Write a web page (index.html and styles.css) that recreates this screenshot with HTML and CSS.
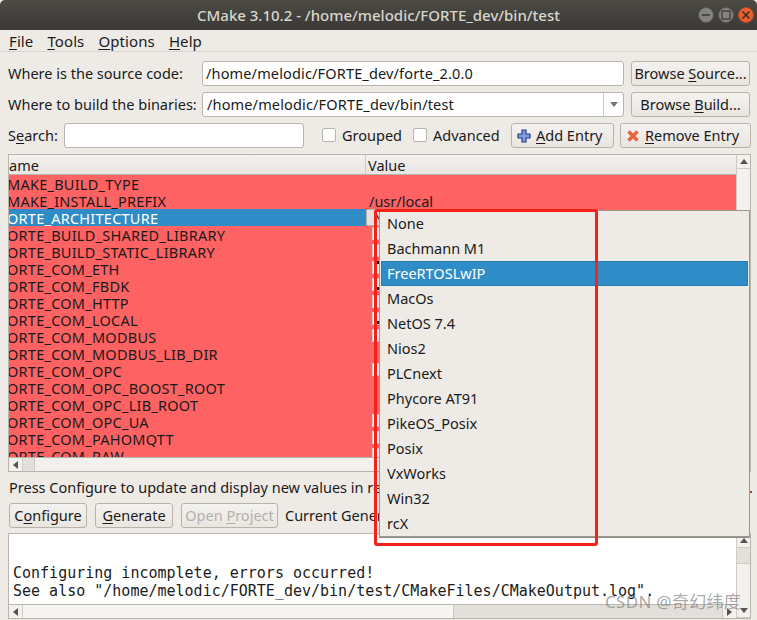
FILE: index.html
```html
<!DOCTYPE html>
<html lang="en">
<head>
<meta charset="utf-8">
<title>CMake 3.10.2</title>
<link rel="stylesheet" href="styles.css">
</head>
<body>
<div class="window">
  <header class="titlebar">
    <span class="title">CMake 3.10.2 - /home/melodic/FORTE_dev/bin/test</span>
    <div class="wm">
      <span class="wm-btn"><svg width="10" height="10" viewBox="0 0 10 10"><path d="M1 5h8" stroke="#35342f" stroke-width="1.5"/></svg></span>
      <span class="wm-btn"><svg width="10" height="10" viewBox="0 0 10 10"><rect x="1" y="1" width="8" height="8" fill="none" stroke="#35342f" stroke-width="1.2"/></svg></span>
      <span class="wm-btn wm-close"><svg width="10" height="10" viewBox="0 0 10 10"><path d="M1.5 1.5l7 7M8.5 1.5l-7 7" stroke="#3c2a20" stroke-width="1.5"/></svg></span>
    </div>
  </header>
  <nav class="menubar">
    <span><u>F</u>ile</span><span><u>T</u>ools</span><span><u>O</u>ptions</span><span><u>H</u>elp</span>
  </nav>
  <div class="form-row first">
    <label class="path-label">Where is the source code:</label>
    <div class="field grow">/home/melodic/FORTE_dev/forte_2.0.0</div>
    <button class="btn browse"><span>Browse <u>S</u>ource...</span></button>
  </div>
  <div class="form-row">
    <label class="path-label">Where to build the binaries:</label>
    <div class="field grow combo"><span class="combo-text">/home/melodic/FORTE_dev/bin/test</span><span class="combo-arrow"><i class="tri-down"></i></span></div>
    <button class="btn browse"><span>Browse <u>B</u>uild...</span></button>
  </div>
  <div class="form-row search-row">
    <label class="search-label">S<u>e</u>arch:</label>
    <div class="field search"></div>
    <label class="check c1"><i class="box"></i>Grouped</label>
    <label class="check c2"><i class="box"></i>Advanced</label>
    <button class="btn add"><svg width="14" height="14" viewBox="0 0 14 14"><path d="M5 1h4v4h4v4H9v4H5V9H1V5h4z" fill="#7f9fdc" stroke="#1f3f8f" stroke-width="1.2"/></svg><span><u>A</u>dd Entry</span></button>
    <button class="btn remove"><svg width="14" height="14" viewBox="0 0 14 14"><path d="M2.5 2.5l9 9M11.5 2.5l-9 9" stroke="#e8643c" stroke-width="3.4"/></svg><span><u>R</u>emove Entry</span></button>
  </div>
  <section class="table">
    <div class="table-main">
      <div class="thead"><div class="th name-col">ame</div><div class="th value-col">Value</div></div>
      <div class="tbody">
        <div class="tr"><div class="name-col">MAKE_BUILD_TYPE</div></div>
        <div class="tr"><div class="name-col">MAKE_INSTALL_PREFIX</div><div class="value-col">/usr/local</div></div>
        <div class="tr sel"><div class="name-col">ORTE_ARCHITECTURE</div><div class="value-col"><i class="editor">None</i></div></div>
        <div class="tr"><div class="name-col">ORTE_BUILD_SHARED_LIBRARY</div><div class="value-col"><i class="cb"></i></div></div>
        <div class="tr"><div class="name-col">ORTE_BUILD_STATIC_LIBRARY</div><div class="value-col"><i class="cb"></i></div></div>
        <div class="tr"><div class="name-col">ORTE_COM_ETH</div><div class="value-col"><i class="cb on hi"></i></div></div>
        <div class="tr"><div class="name-col">ORTE_COM_FBDK</div><div class="value-col"><i class="cb on"></i></div></div>
        <div class="tr"><div class="name-col">ORTE_COM_HTTP</div><div class="value-col"><i class="cb"></i></div></div>
        <div class="tr"><div class="name-col">ORTE_COM_LOCAL</div><div class="value-col"><i class="cb on"></i></div></div>
        <div class="tr"><div class="name-col">ORTE_COM_MODBUS</div><div class="value-col"><i class="cb"></i></div></div>
        <div class="tr"><div class="name-col">ORTE_COM_MODBUS_LIB_DIR</div></div>
        <div class="tr"><div class="name-col">ORTE_COM_OPC</div><div class="value-col"><i class="cb"></i></div></div>
        <div class="tr"><div class="name-col">ORTE_COM_OPC_BOOST_ROOT</div></div>
        <div class="tr"><div class="name-col">ORTE_COM_OPC_LIB_ROOT</div></div>
        <div class="tr"><div class="name-col">ORTE_COM_OPC_UA</div><div class="value-col"><i class="cb"></i></div></div>
        <div class="tr"><div class="name-col">ORTE_COM_PAHOMQTT</div><div class="value-col"><i class="cb"></i></div></div>
        <div class="tr"><div class="name-col">ORTE_COM_RAW</div><div class="value-col"><i class="cb"></i></div></div>
      </div>
      <div class="hscroll"><span class="arrow-btn"><i class="tri-left"></i></span><span class="thumb"></span></div>
    </div>
    <div class="vscroll"><span class="arrow-btn v"><i class="tri-up"></i></span></div>
  </section>
  <p class="hint">Press Configure to update and display new values in red, then press Generate to generate selected build files.</p>
  <div class="actions">
    <button class="btn action"><span>C<u>o</u>nfigure</span></button>
    <button class="btn action"><span><u>G</u>enerate</span></button>
    <button class="btn action open" disabled><span>Open <u>P</u>roject</span></button>
    <span class="generator">Current Generator: Unix Makefiles</span>
  </div>
  <section class="output">
    <div class="out-main">
      <pre class="log">Configuring incomplete, errors occurred!
See also "/home/melodic/FORTE_dev/bin/test/CMakeFiles/CMakeOutput.log".</pre>
      <div class="hscroll out"><span class="arrow-btn"><i class="tri-left"></i></span><span class="out-thumb"></span><span class="out-rest"></span><span class="arrow-btn right"><i class="tri-right"></i></span></div>
    </div>
    <div class="vscroll out-v"><span class="arrow-btn v"><i class="tri-up"></i></span><span class="v-thumb"></span><span class="v-gap"></span><span class="arrow-btn v"><i class="tri-down dark"></i></span></div>
  </section>
</div>
<ul class="popup">
  <li>None</li>
  <li>Bachmann M1</li>
  <li class="current">FreeRTOSLwIP</li>
  <li>MacOs</li>
  <li>NetOS 7.4</li>
  <li>Nios2</li>
  <li>PLCnext</li>
  <li>Phycore AT91</li>
  <li>PikeOS_Posix</li>
  <li>Posix</li>
  <li>VxWorks</li>
  <li>Win32</li>
  <li>rcX</li>
</ul>
<div class="annotation"></div>
<div class="watermark">CSDN @奇幻纬度</div>
</body>
</html>
```
FILE: styles.css
```css
* { box-sizing: border-box; }
html, body { margin: 0; padding: 0; }
body {
  width: 757px; height: 620px; overflow: hidden; position: relative;
  background: #eeebe7; color: #1a1a1a;
  font: 14.5px/1.2 "Noto Sans", "Open Sans", sans-serif;
}
u { text-decoration-thickness: 1px; text-underline-offset: 2px; }
.window { display: flex; flex-direction: column; height: 620px; }
.titlebar {
  height: 30px; flex: none; position: relative;
  display: flex; align-items: center; justify-content: center;
  background: linear-gradient(#4b4a45, #3a3935);
  border-radius: 5px 5px 0 0;
}
.title { color: #d8d5cc; font: 500 15px "Noto Sans", sans-serif; }
.wm { position: absolute; right: 3px; top: 7px; display: flex; gap: 4px; }
.wm-btn {
  width: 16px; height: 16px; border-radius: 50%;
  background: #84837d; display: flex; align-items: center; justify-content: center;
  border: 1px solid #55544f;
}
.wm-close { background: #e9602e; border-color: #b04a24; }
.menubar {
  height: 22px; flex: none; display: flex; gap: 14px; padding: 1px 0 0 9px;
  border-bottom: 1px solid #d8d5d0; font-size: 15px; letter-spacing: .1px; align-items: center;
}
.form-row { display: flex; align-items: center; height: 25px; margin-top: 6px; padding: 0 7px 0 8px; flex: none; }
.form-row.first { margin-top: 9px; }
.path-label { width: 194px; flex: none; white-space: nowrap; }
.field {
  height: 25px; background: #fff; border: 1px solid #bab5ab; border-radius: 3px;
  padding-left: 3px; line-height: 23px; white-space: nowrap; letter-spacing: .15px;
}
.grow { flex: 1; min-width: 0; }
.combo { display: flex; padding-left: 4px; }
.combo-text { flex: 1; }
.combo-arrow { width: 20px; border-left: 1px solid #cfcbc4; display: flex; align-items: center; justify-content: center; }
.btn {
  font: inherit; color: inherit; height: 25px; padding: 0;
  background: linear-gradient(#f4f2f0, #e9e6e1);
  border: 1px solid #b8b3a9; border-radius: 3px;
  display: flex; align-items: center; justify-content: center; gap: 5px;
  white-space: nowrap;
}
.browse { width: 119px; margin-left: 7px; flex: none; }
.search-label { width: 56px; flex: none; }
.search { width: 240px; flex: none; }
.check { display: flex; align-items: center; gap: 6px; flex: none; }
.box { width: 14px; height: 14px; background: #fff; border: 1px solid #bab5ab; border-radius: 2px; display: block; }
.c1 { margin-left: 18px; width: 91px; }
.c2 { width: 98px; }
.add { width: 103px; flex: none; justify-content: flex-start; padding-left: 5px; gap: 5px; }
.remove { width: 131px; margin-left: 6px; flex: none; justify-content: flex-start; padding-left: 5px; gap: 5px; }
.table {
  height: 318px; margin: 6px 6px 0 8px; flex: none; display: flex;
  border: 1px solid #bab5ab; background: #fff;
}
.table-main { flex: 1; min-width: 0; display: flex; flex-direction: column; }
.thead {
  height: 20px; flex: none; display: flex; background: linear-gradient(#f3f1ef, #e9e6e2);
  border-bottom: 1px solid #bab5ab; line-height: 20px;
}
.name-col { width: 357px; flex: none; white-space: nowrap; overflow: hidden; }
.value-col { flex: 1; min-width: 0; white-space: nowrap; position: relative; padding-left: 3px; }
.th.name-col { border-right: 1px solid #cfcbc4; }
.th.value-col { padding-left: 2px; }
.tbody { flex: 1; min-height: 0; overflow: hidden; background: #ff6262; }
.tr { height: 17px; display: flex; line-height: 19px; }
.tr .name-col { text-indent: -2px; letter-spacing: .25px; line-height: 19px; }
.tr.sel { background: #308cc6; color: #fff; }
.tr.sel .value-col { background: #ff6262; }
.editor {
  position: absolute; left: 0; top: 0; width: 40px; height: 17px; padding-left: 6px;
  background: #e6e3de; border: 1px solid #b8b3a9; border-radius: 2px; display: block;
  font-style: normal; color: #1a1a1a; line-height: 15px;
}
.cb { position: absolute; left: 6px; top: 1px; width: 13px; height: 13px; background: #f4f2f0; border: 1px solid #d2cfca; display: block; }
.cb.on::after { content: ""; position: absolute; left: 4px; top: 8px; width: 2px; height: 3px; background: #111; }
.cb.on.hi::after { top: -1px; }
.hscroll {
  height: 14px; flex: none; display: flex; background: #f3f1ee; border-top: 1px solid #bab5ab;
}
.arrow-btn { width: 14px; flex: none; display: flex; align-items: center; justify-content: center; background: #f3f1ee; border-right: 1px solid #cfcbc4; }
.arrow-btn.v { width: auto; height: 14px; border-right: 0; border-bottom: 1px solid #cfcbc4; flex: none; }
.arrow-btn.right { border-right: 0; border-left: 1px solid #cfcbc4; }
.thumb { width: 12px; background: #e3e0dc; border-right: 1px solid #cfcbc4; }
.vscroll { width: 14px; flex: none; display: flex; flex-direction: column; background: #f3f1ee; border-left: 1px solid #cfcbc4; }
.tri-up, .tri-down, .tri-left, .tri-right { width: 0; height: 0; display: block; border-style: solid; border-color: transparent; }
.tri-up { border-width: 0 4px 5px; border-bottom-color: #555; }
.tri-down { border-width: 5px 4px 0; border-top-color: #777; }
.tri-down.dark { border-top-color: #555; }
.tri-left { border-width: 4px 5px 4px 0; border-right-color: #555; }
.tri-right { border-width: 4px 0 4px 5px; border-left-color: #555; }
.hint { margin: 5px 0 0 9px; height: 20px; line-height: 20px; white-space: nowrap; flex: none; }
.actions { display: flex; align-items: center; height: 25px; margin-top: 6px; padding-left: 9px; flex: none; white-space: nowrap; overflow: hidden; }
.action { width: 78px; flex: none; margin-right: 8px; }
.open { width: 97px; margin-right: 7px; color: #b3b0aa; }
.output {
  flex: 1; min-height: 0; margin: 5px 6px 1px 8px; display: flex;
  border: 1px solid #bab5ab; background: #fff;
}
.out-main { flex: 1; min-width: 0; display: flex; flex-direction: column; }
.log {
  flex: 1; min-height: 0; overflow: hidden; margin: 0; padding: 30px 0 0 4px;
  font: 15px/18px "DejaVu Sans Mono", monospace; color: #1c1c1c;
}
.out-thumb { width: 431px; background: #f6f5f3; border-right: 1px solid #cfcbc4; flex: none; }
.out-rest { flex: 1; background: #e3e0dc; }
.out-v { background: #f3f1ee; }
.v-thumb { height: 16px; background: #e3e0dc; border-bottom: 1px solid #cfcbc4; flex: none; }
.v-gap { flex: 1; }
.popup {
  position: absolute; left: 379px; top: 210px; width: 371px; height: 327px;
  margin: 0; padding: 0 1px; list-style: none; background: #eeebe6;
  border: 1px solid #9b9891; box-shadow: 0 1px 0 #8f8c86;
}
.popup li { height: 25px; line-height: 25px; padding-left: 6px; white-space: nowrap; }
.popup .current { background: #308cc6; color: #fff; border: 1px solid #2a7bb0; line-height: 23px; padding-left: 5px; }
.annotation {
  position: absolute; left: 374px; top: 209px; width: 224px; height: 337px;
  border: 3px solid #f5211a; border-radius: 3px;
}
.watermark {
  position: absolute; left: 605px; top: 588px; white-space: nowrap; letter-spacing: .3px;
  font: 17px "Noto Sans", "Noto Sans CJK SC", sans-serif; color: rgba(120, 120, 120, .65);
}
```
